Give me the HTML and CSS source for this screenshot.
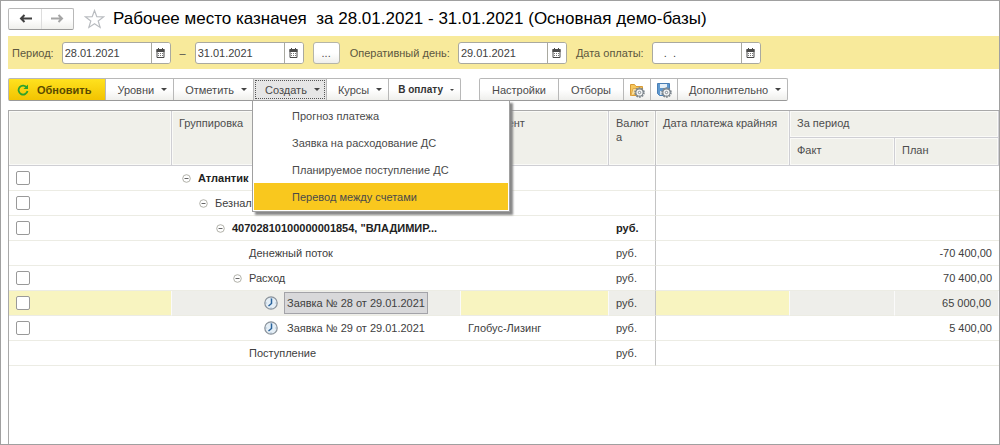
FILE: index.html
```html
<!DOCTYPE html>
<html lang="ru">
<head>
<meta charset="utf-8">
<title>Рабочее место казначея</title>
<link rel="stylesheet" href="styles.css">
</head>
<body>
<svg class="defs" aria-hidden="true">
  <symbol id="calendar" viewBox="0 0 9 10">
    <path d="M1 1.500h7v8H1z" fill="#fff" stroke="#4a4a4a"/>
    <path d="M.5 1h8v3h-8z" fill="#4a4a4a"/>
    <path d="M2.500 0v2M6.500 0v2" stroke="#4a4a4a"/>
    <path d="M2 5.500h5M2 7.500h5" stroke="#777" stroke-dasharray="1 1"/>
  </symbol>
  <symbol id="collapse" viewBox="0 0 9 9">
    <circle cx="4.500" cy="4.500" r="3.800" fill="#fff" stroke="#a9a9a0" stroke-width=".9"/>
    <path d="M2.500 4.500h4" stroke="#666"/>
  </symbol>
  <symbol id="clock" viewBox="0 0 14 14">
    <circle cx="7" cy="7" r="6.200" fill="#e4eef6" stroke="#8a929a" stroke-width="1.200"/>
    <path d="M7 1.500v1M7 11.500v1M1.500 7h1M11.500 7h1" stroke="#8aa4bc"/>
    <path d="M7.500 2.500v5L4.500 10" fill="none" stroke="#28639c" stroke-width="1.500"/>
  </symbol>
  <symbol id="gear" viewBox="0 0 10 10">
    <circle cx="5" cy="5" r="4" fill="none" stroke="#7c858c" stroke-width="1.600" stroke-dasharray="1.600 .9"/>
    <circle cx="5" cy="5" r="3.300" fill="#f4f6f7" stroke="#7c858c"/>
    <circle cx="5" cy="5" r="1.100" fill="#fff" stroke="#7c858c" stroke-width=".9"/>
  </symbol>
</svg>
<main class="window">
  <header class="title-bar">
    <div class="group nav">
      <button class="nav-button" type="button" aria-label="Назад"><svg width="13" height="9" viewBox="0 0 13 9"><path d="M13 4.500H3M5.500 1L2 4.500 5.500 8" fill="none" stroke="#404040" stroke-width="2"/></svg></button>
      <button class="nav-button" type="button" aria-label="Вперед"><svg width="13" height="9" viewBox="0 0 13 9"><path d="M0 4.500h10M7.500 1L11 4.500 7.500 8" fill="none" stroke="#a5a5a5" stroke-width="2"/></svg></button>
    </div>
    <button class="star" type="button" aria-label="В избранное"><svg width="21" height="20" viewBox="0 0 21 20"><path d="M10.500 1.500l2.300 6.200 6.700.2-5.300 4.100 1.900 6.400-5.600-3.700-5.600 3.700 1.900-6.400L1.500 7.900l6.700-.2z" fill="#fff" stroke="#b9bcc0" stroke-width="1.200"/></svg></button>
    <h1 class="title">Рабочее место казначея&nbsp; за 28.01.2021 - 31.01.2021 (Основная демо-базы)</h1>
  </header>

  <form class="filters">
    <label class="label" for="from">Период:</label>
    <span class="date"><input class="date-input" id="from" type="text" value="28.01.2021"><button class="date-button" type="button" aria-label="Календарь"><svg width="9" height="10"><use href="#calendar"/></svg></button></span>
    <label class="dash" for="to">–</label>
    <span class="date"><input class="date-input" id="to" type="text" value="31.01.2021"><button class="date-button" type="button" aria-label="Календарь"><svg width="9" height="10"><use href="#calendar"/></svg></button></span>
    <button class="more" type="button">...</button>
    <label class="label" for="day">Оперативный день:</label>
    <span class="date"><input class="date-input" id="day" type="text" value="29.01.2021"><button class="date-button" type="button" aria-label="Календарь"><svg width="9" height="10"><use href="#calendar"/></svg></button></span>
    <label class="label" for="pay">Дата оплаты:</label>
    <span class="date"><input class="date-input" id="pay" type="text" value="   .  ."><button class="date-button" type="button" aria-label="Календарь"><svg width="9" height="10"><use href="#calendar"/></svg></button></span>
  </form>

  <div class="toolbar">
    <div class="group">
      <button class="tool refresh" type="button"><svg width="12" height="12" viewBox="0 0 12 12"><path d="M9.800 3.500A4.500 4.500 0 1 0 10.500 7" fill="none" stroke="#2ea12c" stroke-width="1.800"/><path d="M11 .5v4.500H6.500z" fill="#2ea12c"/></svg>Обновить</button>
      <button class="tool drop" type="button">Уровни</button>
      <button class="tool drop" type="button">Отметить</button>
      <div class="menu-host">
        <button class="tool drop active" type="button" aria-haspopup="menu" aria-expanded="true">Создать</button>
        <div class="menu" role="menu">
          <button class="menu-item" type="button" role="menuitem">Прогноз платежа</button>
          <button class="menu-item" type="button" role="menuitem">Заявка на расходование ДС</button>
          <button class="menu-item" type="button" role="menuitem">Планируемое поступление ДС</button>
          <button class="menu-item selected" type="button" role="menuitem">Перевод между счетами</button>
        </div>
      </div>
      <button class="tool drop" type="button">Курсы</button>
      <button class="tool drop pay" type="button">В оплату</button>
    </div>
    <div class="group">
      <button class="tool" type="button">Настройки</button>
      <button class="tool" type="button">Отборы</button>
      <button class="tool icon" type="button" aria-label="Выбрать настройки"><svg width="16" height="16" viewBox="0 0 16 16"><path d="M1.500 13.500v-11h4l1.500 2h6.500v9z" fill="#f6c75c" stroke="#d99a35"/><path d="M2 13.500L4 6.500h9" fill="#fbe0a0" stroke="#e0a94a"/><use href="#gear" x="5" y="5" width="11" height="11"/></svg></button>
      <button class="tool icon" type="button" aria-label="Сохранить настройки"><svg width="16" height="16" viewBox="0 0 16 16"><path d="M1.500 1.500h12v12h-10l-2-2z" fill="#5e98cf" stroke="#4a7fb5"/><path d="M4 2h7v4H4z" fill="#e6f0f8"/><path d="M4 9h5v4H4z" fill="#d5e3ef"/><use href="#gear" x="5" y="5" width="11" height="11"/></svg></button>
      <button class="tool drop" type="button">Дополнительно</button>
    </div>
  </div>

  <div class="grid">
    <table class="table">
      <colgroup><col class="c-check"><col class="c-group"><col class="c-client"><col class="c-currency"><col class="c-date"><col class="c-fact"><col></colgroup>
      <thead>
        <tr><th rowspan="2"></th><th rowspan="2">Группировка</th><th rowspan="2">Контрагент</th><th class="currency" rowspan="2">Валюта</th><th rowspan="2">Дата платежа крайняя</th><th colspan="2">За период</th></tr>
        <tr><th class="sub">Факт</th><th class="sub">План</th></tr>
      </thead>
      <tbody>
        <tr><td><input class="check" type="checkbox" aria-label="Атлантик"></td><td><div class="node strong l1"><svg width="9" height="9"><use href="#collapse"/></svg>Атлантик</div></td><td></td><td class="currency"></td><td></td><td></td><td></td></tr>
        <tr><td><input class="check" type="checkbox" aria-label="Безналичные"></td><td><div class="node l2"><svg width="9" height="9"><use href="#collapse"/></svg>Безналичные</div></td><td></td><td class="currency"></td><td></td><td></td><td></td></tr>
        <tr><td><input class="check" type="checkbox" aria-label="Счет"></td><td><div class="node strong l3"><svg width="9" height="9"><use href="#collapse"/></svg>40702810100000001854, "ВЛАДИМИР...</div></td><td></td><td class="currency strong">руб.</td><td></td><td></td><td></td></tr>
        <tr><td></td><td><div class="node leaf">Денежный поток</div></td><td></td><td class="currency">руб.</td><td></td><td></td><td class="sum">-70 400,00</td></tr>
        <tr><td><input class="check" type="checkbox" aria-label="Расход"></td><td><div class="node l4"><svg width="9" height="9"><use href="#collapse"/></svg>Расход</div></td><td></td><td class="currency">руб.</td><td></td><td></td><td class="sum">70 400,00</td></tr>
        <tr class="current"><td class="hot"><input class="check" type="checkbox" aria-label="Заявка № 28"></td><td><div class="node l5"><svg width="14" height="14"><use href="#clock"/></svg><span class="cell-focus">Заявка № 28 от 29.01.2021</span></div></td><td class="hot"></td><td class="currency">руб.</td><td class="hot"></td><td></td><td class="sum">65 000,00</td></tr>
        <tr><td><input class="check" type="checkbox" aria-label="Заявка № 29"></td><td><div class="node l5"><svg width="14" height="14"><use href="#clock"/></svg><span class="cell-text">Заявка № 29 от 29.01.2021</span></div></td><td>Глобус-Лизинг</td><td class="currency">руб.</td><td></td><td></td><td class="sum">5 400,00</td></tr>
        <tr><td></td><td><div class="node leaf">Поступление</div></td><td></td><td class="currency">руб.</td><td></td><td></td><td></td></tr>
      </tbody>
    </table>
  </div>
</main>
</body>
</html>
```
FILE: styles.css
```css
* { box-sizing: border-box; }
body { margin: 0; font: 11px/14px "Liberation Sans", Arial, sans-serif; color: #4a4a4a; }
button, input { font: inherit; color: inherit; margin: 0; }
button { padding: 0; cursor: pointer; }
svg { display: block; flex: none; }
.defs { position: absolute; width: 0; height: 0; }

.window { display: flex; flex-direction: column; min-height: 100vh; padding-left: 7px; border: 1px solid #a0a0a0; background: #fff; }

.title-bar { display: flex; align-items: center; height: 35px; }
.group { display: flex; border: 1px solid #b8b8b8; border-bottom-color: #999; border-radius: 2px; background: linear-gradient(#fff 50%, #efefec); }
.nav { height: 22px; }
.nav-button { display: grid; place-items: center; width: 32px; border: 0; background: none; }
.group > .nav-button + .nav-button { border-left: 1px solid #ddd; }
.star { margin: 0 8px 0 10px; border: 0; background: none; }
.title { margin: 0; font-size: 17px; line-height: 20px; font-weight: 400; color: #000; white-space: nowrap; }

.filters { display: flex; align-items: center; height: 33px; padding-left: 4px; background: #f8ea9b; white-space: nowrap; }
.label { margin-right: 8px; color: #5c573f; }
.date { display: flex; width: 109px; height: 22px; border: 1px solid #a9a9a0; border-radius: 3px; background: #fff; overflow: hidden; }
.date-input { flex: 1; min-width: 0; padding: 0 2px; border: 0; background: none; color: #404040; outline: 0; white-space: pre; }
.date-button { display: grid; place-items: center; width: 19px; border: 0; border-left: 1px solid #a9a9a0; background: #fff; }
.dash { width: 24px; text-align: center; }
.more { width: 27px; height: 22px; margin: 0 10px 0 9px; border: 1px solid #b5b5a8; border-radius: 3px; background: linear-gradient(#fff 50%, #efefec); }
.date + .label { margin-left: 9px; }

.toolbar { display: flex; gap: 18px; padding: 9px 0; }
.tool { display: flex; align-items: center; height: 21px; padding: 0 12px; border: 0; background: none; white-space: nowrap; }
.group > * + * { border-left: 1px solid #b8b8b8; }
.refresh { gap: 8px; padding: 0 14px 0 8px; background: linear-gradient(#ffe21f, #f2c300); font-weight: 700; color: #5a4a00; }
.drop { padding: 0 6px 0 11px; }
.drop::after { content: ""; margin-left: 7px; border: 3px solid transparent; border-top-color: #444; border-bottom: 0; }
.active { background: #e6e6e6; outline: 1px dotted #555; outline-offset: -2px; }
.pay { font-weight: 700; font-size: 10px; padding-left: 9px; color: #333; }
.pay::after { border-width: 2px; border-bottom: 0; }
.icon { padding: 0 5px; }
.menu-host { position: relative; }
.menu { position: absolute; z-index: 2; top: 21px; left: -2px; width: 258px; padding: 1px; border: 1px solid #a0a0a0; background: #fff; box-shadow: 3px 3px 2px #888; }
.menu-item { display: block; width: 100%; height: 27px; padding: 0 38px; border: 0; background: none; text-align: left; white-space: nowrap; }
.selected { background: #f9c81e; }

.grid { flex: 1; border: 1px solid #a9a9a9; border-width: 1px 0 0 1px; }
.table { width: 100%; border-collapse: separate; border-spacing: 0; table-layout: fixed; color: #404040; }
.c-check { width: 163px; }
.c-group { width: 289px; }
.c-client { width: 148px; }
.c-currency { width: 47px; }
.c-date { width: 134px; }
.c-fact { width: 105px; }
th { height: 27px; padding: 5px 7px; border: 1px solid #cfcfd4; border-width: 0 1px 1px 0; background: #f0f0ea; font-weight: 400; text-align: left; vertical-align: top; overflow-wrap: anywhere; color: #4d4d4d; box-shadow: inset 0 0 0 1px #fafaf7; }
.sub { height: 28px; }
td { height: 25px; padding: 0 7px; border-bottom: 1px solid #ecece4; white-space: nowrap; }
.currency { padding-right: 3px; border-right: 1px solid #c4c4c4; }
.strong { font-weight: 700; color: #222; }
.sum { text-align: right; }
.check { display: block; width: 14px; height: 14px; border: 1px solid #999; border-radius: 2px; background: #fff; appearance: none; }
.node { display: flex; align-items: center; gap: 7px; }
.l1 { padding-left: 3px; }
.l2 { padding-left: 20px; }
.l3 { padding-left: 37px; }
.l4 { padding-left: 54px; }
.leaf { padding-left: 70px; }
.l5 { padding-left: 85px; gap: 6px; }
.cell-focus, .cell-text { padding: 3px 2px; border: 1px solid transparent; }
.cell-focus { border-color: #a3a3a8; background: #d8d8da; }
.current td { background: #eeeeea; border-right: 1px solid #fafafa; }
.current .currency { border-right-color: #c4c4c4; }
.current .hot { background: #f8f4c0; }
```
